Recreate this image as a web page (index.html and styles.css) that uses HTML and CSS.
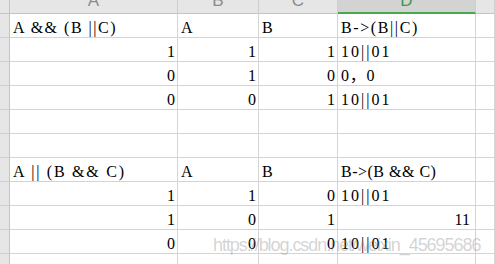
FILE: index.html
```html
<!DOCTYPE html>
<html>
<head>
<meta charset="utf-8">
<link rel="stylesheet" href="styles.css">
</head>
<body>
<div class="sheet">
  <div class="hd corner"></div>
  <div class="hd">A</div>
  <div class="hd">B</div>
  <div class="hd">C</div>
  <div class="hd sel">D</div>
  <div class="hd"></div>

  <div class="rh"></div>
  <div class="c t ls15">A &amp;&amp; (B ||C)</div>
  <div class="c t">A</div>
  <div class="c t">B</div>
  <div class="c t ls16">B-&gt;(B||C)</div>
  <div class="c"></div>

  <div class="rh"></div>
  <div class="c n">1</div>
  <div class="c n">1</div>
  <div class="c n">1</div>
  <div class="c t ls2">10||01</div>
  <div class="c"></div>

  <div class="rh"></div>
  <div class="c n">0</div>
  <div class="c n">1</div>
  <div class="c n">0</div>
  <div class="c t ls08">0，0</div>
  <div class="c"></div>

  <div class="rh"></div>
  <div class="c n">0</div>
  <div class="c n">0</div>
  <div class="c n">1</div>
  <div class="c t ls2">10||01</div>
  <div class="c"></div>

  <div class="rh"></div>
  <div class="c"></div>
  <div class="c"></div>
  <div class="c"></div>
  <div class="c"></div>
  <div class="c"></div>

  <div class="rh"></div>
  <div class="c"></div>
  <div class="c"></div>
  <div class="c"></div>
  <div class="c"></div>
  <div class="c"></div>

  <div class="rh"></div>
  <div class="c t ls175">A || (B &amp;&amp; C)</div>
  <div class="c t">A</div>
  <div class="c t">B</div>
  <div class="c t ls05">B-&gt;(B &amp;&amp; C)</div>
  <div class="c"></div>

  <div class="rh"></div>
  <div class="c n">1</div>
  <div class="c n">1</div>
  <div class="c n">0</div>
  <div class="c t ls2">10||01</div>
  <div class="c"></div>

  <div class="rh"></div>
  <div class="c n">1</div>
  <div class="c n">0</div>
  <div class="c n">1</div>
  <div class="c n pr5">11</div>
  <div class="c"></div>

  <div class="rh"></div>
  <div class="c n">0</div>
  <div class="c n">0</div>
  <div class="c n">0</div>
  <div class="c t ls2">10||01</div>
  <div class="c"></div>

  <div class="rh"></div>
  <div class="c"></div>
  <div class="c"></div>
  <div class="c"></div>
  <div class="c"></div>
  <div class="c"></div>
</div>
<div class="watermark">https://blog.csdn.net/weixin_45695686</div>
</body>
</html>
```
FILE: styles.css
```css
html, body {
  margin: 0;
  padding: 0;
  background: #ffffff;
  width: 495px;
  height: 264px;
  overflow: hidden;
}

.sheet {
  display: grid;
  grid-template-columns: 10px 168px 81px 79px 138px 1fr;
  grid-template-rows: 14px;
  grid-auto-rows: 24px;
  font-family: "Liberation Serif", "Noto Sans CJK SC", serif;
  font-size: 16px;
  color: #000;
}

.sheet > div {
  box-sizing: border-box;
  border-right: 1px solid #d4d4d4;
  border-bottom: 1px solid #d4d4d4;
  overflow: hidden;
  white-space: pre;
}

.hd {
  background: #e6e6e6;
  border-bottom-color: #c4c4c4 !important;
  border-right-color: #cfcfcf !important;
  font-family: "Liberation Sans", sans-serif;
  font-size: 17px;
  color: #8c8c8c;
  text-align: center;
  line-height: 2px;
}

.hd.corner {
  border-right-color: #c4c4c4 !important;
}

.hd.sel {
  background: #d3d3d3;
  color: #3f9a45;
  border-bottom: 2px solid #4aa84e !important;
}

.rh {
  background: #e6e6e6;
  border-right-color: #c4c4c4 !important;
  border-bottom-color: #d0d0d0 !important;
}

.c {
  display: flex;
  align-items: flex-end;
  line-height: 19px;
}

.t {
  padding-left: 3px;
  justify-content: flex-start;
}

.n {
  padding-right: 2px;
  justify-content: flex-end;
}

.pr5 {
  padding-right: 5px;
}

.ls15 { letter-spacing: 1.5px; }
.ls16 { letter-spacing: 1.6px; }
.ls175 { letter-spacing: 1.75px; }
.ls2 { letter-spacing: 2px; }
.ls08 { letter-spacing: 0.8px; }
.ls05 { letter-spacing: 0.5px; }

.watermark {
  position: absolute;
  left: 213px;
  top: 236px;
  font-family: "Liberation Sans", sans-serif;
  font-size: 18px;
  line-height: 18px;
  letter-spacing: -1.05px;
  color: rgba(140, 140, 140, 0.38);
  white-space: nowrap;
  pointer-events: none;
}
```
